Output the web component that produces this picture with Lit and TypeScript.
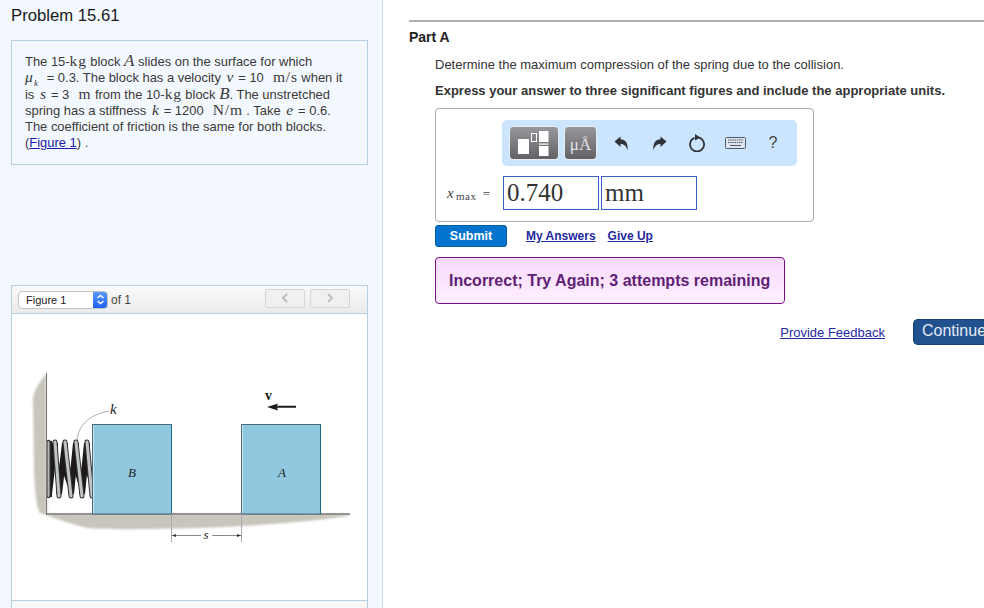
import { LitElement, html, css, svg } from "lit";
import { customElement } from "lit/decorators.js";

const front: [number, number][] = [[55, 59], [65, 71], [76, 82], [87, 92]];
const back: [number, number][] = [[49, 55], [59, 65], [71, 76], [82, 87]];

function figure() {
  return html`<svg class="fig" width="355" height="286" viewBox="12 314 355 286" xmlns="http://www.w3.org/2000/svg">
    <defs>
      <filter id="b" x="-30%" y="-30%" width="160%" height="160%"><feGaussianBlur stdDeviation="1.3"/></filter>
    </defs>
    <path filter="url(#b)" fill="#c8c5bc" d="M46 373 C40 383 33 390 33 400 L34 470 C35 490 36 506 40 513 C55 518 70 524 88 528 C110 530 150 529 200 528 C250 526 300 523 348 516 L350 514 L47 514 Z"/>
    ${back.map(([a, b]) => svg`<line x1=${b} y1="443" x2=${a} y2="494" stroke="#1e1a1b" stroke-width="6"/>`)}
    <path d="M48 441 H52 V497 H48 Z M58 470 L65 445 L71 470 L76 445 L82 470 L87 445 L92 470 L92 490 L85 470 L80 490 L74 470 L69 490 L62 470 Z" fill="#1e1a1b"/>
    <line x1="48.500" y1="442" x2="48.500" y2="496" stroke="#333" stroke-width="4.500" stroke-linecap="round"/>
    <line x1="48.500" y1="442" x2="48.500" y2="496" stroke="#b5b6b9" stroke-width="2" stroke-linecap="round"/>
    ${front.map(([a, b]) => svg`<line x1=${a} y1="442" x2=${b} y2="496" stroke="#333" stroke-width="5" stroke-linecap="round"/>
      <line x1=${a} y1="442" x2=${b} y2="496" stroke="#c2c3c6" stroke-width="3" stroke-linecap="round"/>`)}
    <line x1="46.500" y1="373" x2="46.500" y2="515" stroke="#77777a" stroke-width="1"/>
    <line x1="46" y1="514" x2="350" y2="514" stroke="#77777a" stroke-width="1.500"/>
    <rect x="92.500" y="424.500" width="79" height="89.500" fill="#90c8df" stroke="#4d6a78" stroke-width="1"/>
    <rect x="241.500" y="424.500" width="79" height="89.500" fill="#90c8df" stroke="#4d6a78" stroke-width="1"/>
    <line x1="93.500" y1="425" x2="93.500" y2="513" stroke="#c4e6f1" stroke-width="1"/>
    <line x1="242.500" y1="425" x2="242.500" y2="513" stroke="#c4e6f1" stroke-width="1"/>
    <line x1="171.500" y1="425" x2="171.500" y2="514" stroke="#1d6c86" stroke-width="1"/>
    <line x1="320.500" y1="425" x2="320.500" y2="514" stroke="#1d6c86" stroke-width="1"/>
    <path fill="none" stroke="#8a8a8a" stroke-width=".7" d="M77 440 C79 422 93 414 109 411"/>
    <text x="110" y="414" class="it" font-size="15">k</text>
    <text x="132" y="477" class="it" font-size="13" text-anchor="middle">B</text>
    <text x="282" y="477" class="it" font-size="13" text-anchor="middle">A</text>
    <text x="268.500" y="400" class="bd" font-size="14" text-anchor="middle">v</text>
    <path d="M267 407 L278 403.500 L277 405.800 L296 405.800 L296 407.800 L277 407.800 L278 410.500 Z" fill="#1c1a1a"/>
    <line x1="171.500" y1="514" x2="171.500" y2="542" stroke="#aaa" stroke-width="1"/>
    <line x1="241.500" y1="514" x2="241.500" y2="542" stroke="#aaa" stroke-width="1"/>
    <line x1="172" y1="535.500" x2="201" y2="535.500" stroke="#555" stroke-width=".7"/>
    <line x1="212" y1="535.500" x2="241" y2="535.500" stroke="#555" stroke-width=".7"/>
    <path d="M172 535.500 L176 534 L176 537 Z M241 535.500 L237 534 L237 537 Z" fill="#333"/>
    <text x="206" y="538.500" class="it" font-size="13" text-anchor="middle">s</text>
  </svg>`;
}

@customElement("app-root")
export class AppRoot extends LitElement {
  static styles = css`
    :host { display: block; width: 984px; height: 608px; overflow: hidden; font-family: "Liberation Sans", Arial, sans-serif; color: #333; background: #fff; }
    .page { display: flex; height: 608px; }
    .left { flex: none; box-sizing: border-box; height: 608px; background: #f3f8fe; border-right: 1px solid #c9d9ea; padding: 7px 14px 0 11px; width: 383px; overflow: hidden; }
    h1 { margin: 0; font-size: 16.700px; line-height: 18px; font-weight: 400; color: #1a1a1a; }
    .prob { margin-top: 15px; height: 125px; box-sizing: border-box; border: 1px solid #b7cde0; background: #f3f8fe; padding: 13px 13px 0; font-size: 12.950px; line-height: 16.250px; color: #3a3a3a; white-space: nowrap; }
    .m { font-family: "Liberation Serif", serif; font-size: 15.500px; letter-spacing: .8px; line-height: 0; }
    .u { margin-left: 2px; }
    .i { font-family: "Liberation Serif", serif; font-style: italic; font-size: 15.500px; letter-spacing: .3px; line-height: 0; margin: 0 1px 0 2px; }
    .ilg { font-family: "Liberation Serif", serif; font-style: italic; font-size: 17px; line-height: 0; }
    .mu { margin-left: 0; }
    sub { font-size: 9px; line-height: 0; font-family: "Liberation Serif", serif; font-style: italic; margin-right: 5px; }
    .prob a { color: #1a1aa6; text-decoration: underline; }
    .figwrap { margin-top: 120px; border: 1px solid #b7cde0; background: #fff; height: 340px; box-sizing: border-box; display: flex; flex-direction: column; }
    .fighead { height: 28px; flex: none; box-sizing: border-box; border-bottom: 1px solid #b7cde0; background: linear-gradient(#fafafa, #ebebeb); display: flex; align-items: center; padding: 0 17px 0 6px; font-size: 12px; color: #444; }
    .sel { width: 90px; height: 18px; box-sizing: border-box; background: #fff; border: 1px solid #c4c4c4; border-radius: 4px; font-size: 11px; line-height: 16px; color: #222; padding-left: 7px; position: relative; overflow: hidden; }
    .sel i { position: absolute; right: -1px; top: -1px; width: 15px; height: 18px; background: linear-gradient(#5c9bfb, #1a5ff0); display: flex; align-items: center; justify-content: center; }
    .of { margin-left: 3px; flex: 1; }
    .nav { width: 40px; height: 19px; box-sizing: border-box; border: 1px solid #d5d5d5; border-radius: 2px; background: #f0f0f0; margin-left: 5px; display: flex; align-items: center; justify-content: center; margin-top: -3px; }
    .fig { display: block; flex: none; }
    .figfoot { flex: 1; border-top: 1px solid #b7cde0; background: #f8f8f8; }
    .it { font-family: "Liberation Serif", serif; font-style: italic; fill: #222; }
    .bd { font-family: "Liberation Serif", serif; font-weight: 700; fill: #222; }

    .right { flex: 1; min-width: 0; padding: 20px 0 0 26px; }
    .rule { height: 2px; background: #b0b0b0; }
    .part { margin: 7px 0 0; font-size: 14px; line-height: 16px; font-weight: 700; color: #222; }
    .body { margin-left: 26px; }
    .q { margin: 12px 0 0; font-size: 13px; line-height: 16px; color: #333; }
    .q2 { margin-top: 10px; font-weight: 700; }
    .ans { margin-top: 9px; width: 379px; height: 114px; box-sizing: border-box; border: 1px solid #aaa; border-radius: 4px; padding: 11px 16px 0 9px; }
    .tools { margin-left: 57px; width: 295px; height: 46px; box-sizing: border-box; background: #cbe5fe; border-radius: 5px; display: flex; align-items: center; padding-left: 7px; }
    .tb { height: 34px; box-sizing: border-box; border: 1px solid #e6eef5; border-radius: 4px; background: linear-gradient(#97969b, #626165); display: flex; align-items: center; justify-content: center; margin-right: 5px; flex: none; color: #fff; }
    .tb.a { width: 50px; }
    .tb.b { width: 33px; font-family: "Liberation Serif", serif; font-size: 17px; color: #e4e4e6; padding-top: 3px; }
    .ico { display: flex; justify-content: center; flex: none; width: 38px; }
    .help { font-size: 16px; color: #444; width: 38px; text-align: center; flex: none; }
    .row { display: flex; align-items: center; margin-top: 10px; }
    .lbl { width: 58px; flex: none; font-family: "Liberation Serif", serif; font-size: 13px; color: #444; white-space: nowrap; padding-left: 2px; box-sizing: border-box; }
    .lbl em { font-size: 15px; }
    .lbl small { font-size: 11px; letter-spacing: .6px; position: relative; top: 2px; margin: 0 6px 0 -1px; }
    .inp { width: 96px; height: 34px; box-sizing: border-box; border: 1px solid #3a5fcd; font-family: "Liberation Serif", serif; font-size: 25px; line-height: 32px; color: #333; padding-left: 3px; margin-right: 2px; }
    .acts { display: flex; align-items: center; margin-top: 3px; font-size: 12px; font-weight: 700; }
    .sub { width: 72px; height: 22px; box-sizing: border-box; background: #0274ce; border: 1px solid #035f9f; border-radius: 3px; color: #fff; text-align: center; line-height: 20px; font-size: 12.500px; margin-right: 19px; }
    .acts a { color: #1f2a9e; text-decoration: underline; margin-right: 12px; }
    .msg { margin-top: 10px; width: 350px; height: 47px; box-sizing: border-box; border: 1px solid #7b0e88; border-radius: 4px; background: linear-gradient(#f7d9fb, #fff0ff); color: #5f1f75; font-weight: 700; font-size: 16px; line-height: 45px; padding-left: 13px; white-space: nowrap; }
    .foot { display: flex; justify-content: flex-end; align-items: center; margin-top: 15px; height: 26px; }
    .foot a { font-size: 13px; color: #1f2a9e; text-decoration: underline; margin-right: 28px; }
    .cont { width: 71px; flex: none; height: 26px; box-sizing: border-box; background: #21528f; border: 1px solid #163f75; border-right: 0; border-radius: 5px 0 0 5px; color: #e6ecf6; font-size: 16px; line-height: 22px; padding-left: 8px; white-space: nowrap; overflow: hidden; }
  `;

  render() {
    return html`<div class="page">
      <section class="left">
        <h1>Problem 15.61</h1>
        <div class="prob">
          The 15-<span class="m">kg</span> block <span class="ilg">A</span> slides on the surface for which<br>
          <span class="i mu">μ</span><sub>k</sub> = 0.3. The block has a velocity <span class="i">v</span> = 10 &nbsp;<span class="m u">m/s</span> when it<br>
          is <span class="i">s</span> = 3 &nbsp;<span class="m u">m</span> from the 10-<span class="m">kg</span> block <span class="ilg">B</span>. The unstretched<br>
          spring has a stiffness <span class="i">k</span> = 1200 &nbsp;<span class="m u">N/m</span> . Take <span class="i">e</span> = 0.6.<br>
          The coefficient of friction is the same for both blocks.<br>
          (<a>Figure 1</a>) .
        </div>
        <div class="figwrap">
          <div class="fighead">
            <div class="sel">Figure 1<i><svg width="9" height="13" viewBox="0 0 9 13"><path d="M1.500 5 L4.500 2.500 L7.500 5 M1.500 8 L4.500 10.500 L7.500 8" fill="none" stroke="#fff" stroke-width="1.400"/></svg></i></div>
            <span class="of">of 1</span>
            <div class="nav"><svg width="8" height="10" viewBox="0 0 8 10"><path d="M6 1 L2 5 L6 9" fill="none" stroke="#bbb" stroke-width="1.800"/></svg></div>
            <div class="nav"><svg width="8" height="10" viewBox="0 0 8 10"><path d="M2 1 L6 5 L2 9" fill="none" stroke="#bbb" stroke-width="1.800"/></svg></div>
          </div>
          ${figure()}
          <div class="figfoot"></div>
        </div>
      </section>
      <section class="right">
        <div class="rule"></div>
        <div class="part">Part A</div>
        <div class="body">
          <p class="q">Determine the maximum compression of the spring due to the collision.</p>
          <p class="q q2">Express your answer to three significant figures and include the appropriate units.</p>
          <div class="ans">
            <div class="tools">
              <div class="tb a"><svg width="37" height="26" viewBox="0 0 37 26"><rect x="2" y="9" width="11" height="15" fill="#fff"/><rect x="15.500" y="3.500" width="5" height="8" fill="none" stroke="#fff"/><rect x="23" y="1" width="9.500" height="11" fill="#fff"/><rect x="23" y="13.500" width="9.500" height="1.200" fill="#fff"/><rect x="23" y="16" width="9.500" height="10" fill="#fff"/></svg></div>
              <div class="tb b">μÅ</div>
              <div class="ico"><svg width="15" height="15" viewBox="0 0 15 15"><path d="M0.500 5.500 L6.500 0.500 L6.500 3.200 C11 3.200 14.500 6.500 13.500 14.500 C12.500 10.500 10.500 8 6.500 8 L6.500 11 Z" fill="#33333a"/></svg></div>
              <div class="ico"><svg width="15" height="15" viewBox="0 0 15 15"><path d="M14.500 5.500 L8.500 0.500 L8.500 3.200 C4 3.200 0.500 6.500 1.500 14.500 C2.500 10.500 4.500 8 8.500 8 L8.500 11 Z" fill="#33333a"/></svg></div>
              <div class="ico"><svg width="18" height="18" viewBox="0 0 18 18"><path d="M6.500 3.900 A7 7 0 1 0 11 3.700" fill="none" stroke="#33333a" stroke-width="1.800"/><path d="M7 0 L12.500 3.500 L7 6.500 Z" fill="#33333a"/></svg></div>
              <div class="ico"><svg width="21" height="12" viewBox="0 0 21 12"><rect x=".5" y=".5" width="20" height="11" rx="1" fill="#dde6ee" stroke="#4c5a68"/><path d="M3 3h15M3 5.500h15" stroke="#4c5a68" stroke-dasharray="1.500 .7" fill="none"/><path d="M5 8.500h11" stroke="#4c5a68" fill="none"/></svg></div>
              <div class="help">?</div>
            </div>
            <div class="row">
              <span class="lbl"><em>x</em> <small>max</small>=</span>
              <div class="inp">0.740</div>
              <div class="inp">mm</div>
            </div>
          </div>
          <div class="acts"><div class="sub">Submit</div><a>My Answers</a><a>Give Up</a></div>
          <div class="msg">Incorrect; Try Again; 3 attempts remaining</div>
          <div class="foot"><a>Provide Feedback</a><div class="cont">Continue</div></div>
        </div>
      </section>
    </div>`;
  }
}
